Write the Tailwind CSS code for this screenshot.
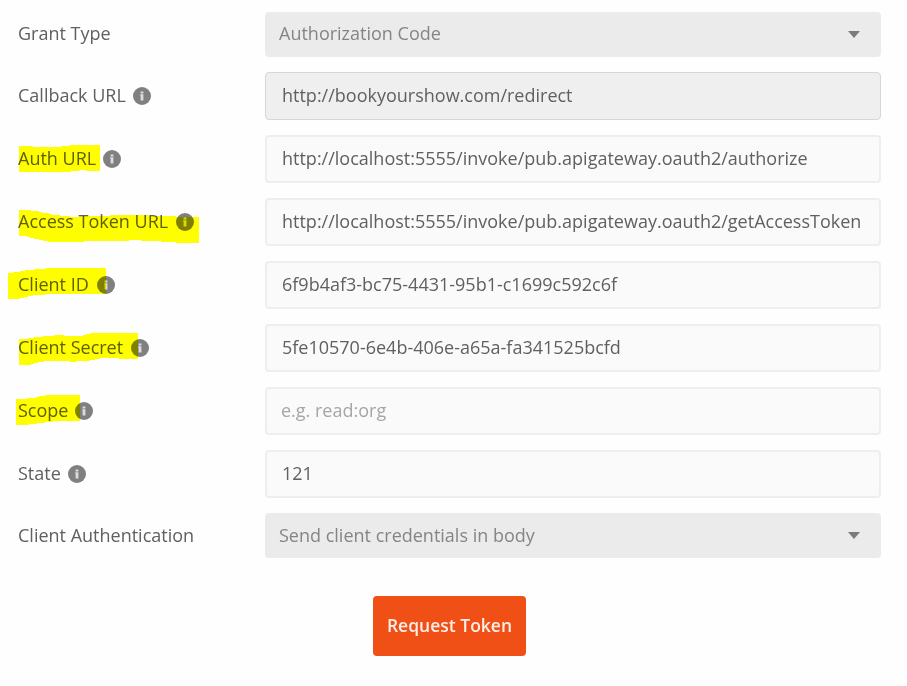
<!DOCTYPE html>
<html lang="en">
<head>
    <meta charset="UTF-8">
    <meta name="viewport" content="width=device-width, initial-scale=1.0">
    <title>Get New Access Token</title>
    <script src="https://cdn.jsdelivr.net/npm/@tailwindcss/browser@4"></script>
</head>
<body class="bg-[#fefefe] font-['Open_Sans',sans-serif] text-[18px] text-[#606060]">
    <!-- info icon shared by the labels -->
    <svg class="hidden">
        <symbol id="info" viewBox="0 0 18 18">
            <circle cx="9" cy="9" r="9" fill="#808080"/>
            <path d="M7.6 4.4h2.8v2H7.6zM7.2 7.2h3.2v6.2H7.6V8.6h-.4z" fill="#dcdcdc"/>
        </symbol>
    </svg>

    <form class="w-[881px] pt-3 flex flex-col gap-[15px]">
        <div class="flex items-center h-[45px]">
            <label class="w-[265px] pl-[18px] pb-0.5"><span>Grant Type</span></label>
            <div class="flex-1 h-full flex items-center justify-between rounded bg-[#ebebeb] pl-[14px] pr-[21px] text-[#858585]">
                <span class="pb-0.5">Authorization Code</span>
                <svg class="w-3 h-[7px]" viewBox="0 0 12 7"><path d="M0 0h12L6 7z" fill="#7c7c7c"/></svg>
            </div>
        </div>

        <div class="flex items-center h-12">
            <label class="w-[265px] pl-[18px] flex items-center gap-[7px]"><span class="pb-0.5">Callback URL</span><svg class="size-[18px]"><use href="#info"/></svg></label>
            <input type="text" value="http://bookyourshow.com/redirect" readonly class="flex-1 min-w-0 h-full rounded border border-[#d6d6d6] bg-[#efefef] px-4 pb-0.5">
        </div>

        <div class="relative flex items-center h-12">
            <label class="w-[265px] pl-[18px] flex items-center gap-[7px]"><span class="pb-0.5">Auth URL</span><svg class="size-[18px]"><use href="#info"/></svg></label>
            <input type="text" value="http://localhost:5555/invoke/pub.apigateway.oauth2/authorize" class="flex-1 min-w-0 h-full rounded border-2 border-[#eeeeee] bg-[#fafafa] px-[15px] pb-0.5">
            <svg class="absolute left-0 top-0 w-[264px] h-12 mix-blend-multiply pointer-events-none" viewBox="0 15 792 144">
                <path d="M57 48H98V51H183V48H208V45H300V123H258V120H238V123H213V126H57Z" fill="#ff0"/>
            </svg>
        </div>

        <div class="relative flex items-center h-12">
            <label class="w-[265px] pl-[18px] flex items-center gap-2"><span class="pb-0.5">Access Token URL</span><svg class="size-[18px]"><use href="#info"/></svg></label>
            <input type="text" value="http://localhost:5555/invoke/pub.apigateway.oauth2/getAccessToken" class="flex-1 min-w-0 h-full rounded border-2 border-[#eeeeee] bg-[#fafafa] px-[15px] pb-0.5">
            <svg class="absolute left-0 top-0 w-[264px] h-12 mix-blend-multiply pointer-events-none" viewBox="0 204 792 144">
                <path d="M57 240H93V243H117V246H126V249H147V252H156V255H180V258H210V261H237V258H330V255H447V258H528V261H597V339H528V336H483V333H423V330H387V333H252V336H144V333H129V330H117V327H102V324H90V321H81V318H57Z" fill="#ff0"/>
            </svg>
        </div>

        <div class="relative flex items-center h-12">
            <label class="w-[265px] pl-[18px] flex items-center gap-2"><span class="pb-0.5">Client ID</span><svg class="size-[18px]"><use href="#info"/></svg></label>
            <input type="text" value="6f9b4af3-bc75-4431-95b1-c1699c592c6f" class="flex-1 min-w-0 h-full rounded border-2 border-[#eeeeee] bg-[#fafafa] px-[15px] pb-0.5">
            <svg class="absolute left-0 top-0 w-[264px] h-12 mix-blend-multiply pointer-events-none" viewBox="0 33 792 144">
                <path d="M24 69H39V66H60V63H75V60H102V57H138V54H318V132H135V135H99V138H84V141H72V144H60V147H24Z" fill="#ff0"/>
            </svg>
        </div>

        <div class="relative flex items-center h-12">
            <label class="w-[265px] pl-[18px] flex items-center gap-2"><span class="pb-0.5">Client Secret</span><svg class="size-[18px]"><use href="#info"/></svg></label>
            <input type="text" value="5fe10570-6e4b-406e-a65a-fa341525bcfd" class="flex-1 min-w-0 h-full rounded border-2 border-[#eeeeee] bg-[#fafafa] px-[15px] pb-0.5">
            <svg class="absolute left-0 top-0 w-[264px] h-12 mix-blend-multiply pointer-events-none" viewBox="0 222 792 144">
                <path d="M57 267H87V264H102V261H129V258H162V255H192V258H249V255H258V252H270V249H414V327H357V324H300V327H285V330H270V333H228V336H207V333H132V336H114V339H102V342H93V345H57Z" fill="#ff0"/>
            </svg>
        </div>

        <div class="relative flex items-center h-12">
            <label class="w-[265px] pl-[18px] flex items-center gap-[7px]"><span class="pb-0.5">Scope</span><svg class="size-[18px]"><use href="#info"/></svg></label>
            <input type="text" placeholder="e.g. read:org" class="flex-1 min-w-0 h-full rounded border-2 border-[#eeeeee] bg-[#fafafa] px-[14px] pb-0.5 placeholder:text-[#a6a6a6]">
            <svg class="absolute left-0 top-0 w-[264px] h-12 mix-blend-multiply pointer-events-none" viewBox="0 51 792 144">
                <path d="M48 87H81V84H108V81H117V78H135V75H240V153H159V156H135V159H111V162H87V165H48Z" fill="#ff0"/>
            </svg>
        </div>

        <div class="flex items-center h-12">
            <label class="w-[265px] pl-[18px] flex items-center gap-[7px]"><span class="pb-0.5">State</span><svg class="size-[18px]"><use href="#info"/></svg></label>
            <input type="text" value="121" class="flex-1 min-w-0 h-full rounded border-2 border-[#eeeeee] bg-[#fafafa] px-[15px] pb-0.5">
        </div>

        <div class="flex items-center h-[45px]">
            <label class="w-[265px] pl-[18px]"><span>Client Authentication</span></label>
            <div class="flex-1 h-full flex items-center justify-between rounded bg-[#ebebeb] pl-[14px] pr-[21px] text-[#858585]">
                <span>Send client credentials in body</span>
                <svg class="w-3 h-[7px]" viewBox="0 0 12 7"><path d="M0 0h12L6 7z" fill="#7c7c7c"/></svg>
            </div>
        </div>

        <button type="button" class="mt-[23px] ml-[373px] w-[153px] h-[60px] pb-0.5 rounded bg-[#f05015] text-[17.5px] text-[#fdeee8] font-semibold">Request Token</button>
    </form>
</body>
</html>
